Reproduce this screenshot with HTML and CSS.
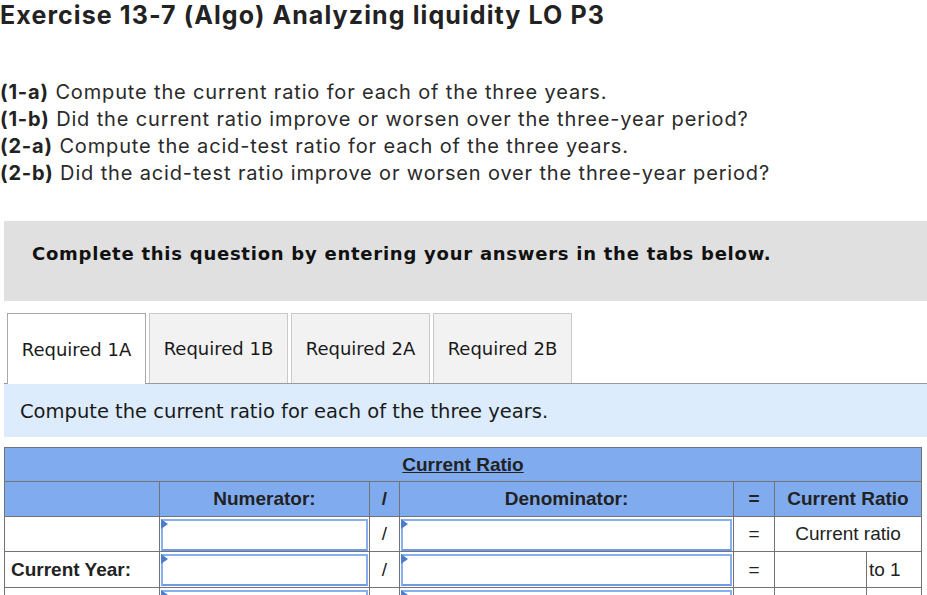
FILE: index.html
```html
<!DOCTYPE html>
<html>
<head>
<meta charset="utf-8">
<link rel="stylesheet" href="styles.css">
</head>
<body>
<h1 class="title">Exercise 13-7 (Algo) Analyzing liquidity LO P3</h1>
<div class="questions">
  <p><b>(1-a)</b> Compute the current ratio for each of the three years.</p>
  <p><b>(1-b)</b> Did the current ratio improve or worsen over the three-year period?</p>
  <p><b>(2-a)</b> Compute the acid-test ratio for each of the three years.</p>
  <p><b>(2-b)</b> Did the acid-test ratio improve or worsen over the three-year period?</p>
</div>
<div class="work">
  <div class="instruct">Complete this question by entering your answers in the tabs below.</div>
  <div class="tabs">
    <div class="tab active">Required 1A</div>
    <div class="tab">Required 1B</div>
    <div class="tab">Required 2A</div>
    <div class="tab">Required 2B</div>
  </div>
  <div class="prompt">Compute the current ratio for each of the three years.</div>
  <table class="ratio">
    <colgroup>
      <col class="c-label"><col class="c-num"><col class="c-slash"><col class="c-den"><col class="c-eq"><col class="c-res"><col class="c-to">
    </colgroup>
    <tr class="head h1">
      <th colspan="7"><span class="u">Current Ratio</span></th>
    </tr>
    <tr class="head h2">
      <th></th>
      <th>Numerator:</th>
      <th>/</th>
      <th>Denominator:</th>
      <th>=</th>
      <th colspan="2">Current Ratio</th>
    </tr>
    <tr class="r-a">
      <td></td>
      <td class="in"><div class="box"><input type="text"></div></td>
      <td class="op">/</td>
      <td class="in"><div class="box"><input type="text"></div></td>
      <td class="op">=</td>
      <td colspan="2" class="res">Current ratio</td>
    </tr>
    <tr class="r-b">
      <td class="lbl">Current Year:</td>
      <td class="in"><div class="box"><input type="text"></div></td>
      <td class="op">/</td>
      <td class="in"><div class="box"><input type="text"></div></td>
      <td class="op">=</td>
      <td></td>
      <td class="to">to 1</td>
    </tr>
    <tr class="r-a">
      <td class="lbl">1 Year Ago:</td>
      <td class="in"><div class="box"><input type="text"></div></td>
      <td class="op">/</td>
      <td class="in"><div class="box"><input type="text"></div></td>
      <td class="op">=</td>
      <td></td>
      <td class="to">to 1</td>
    </tr>
    <tr class="r-b">
      <td class="lbl">2 Years Ago:</td>
      <td class="in"><div class="box"><input type="text"></div></td>
      <td class="op">/</td>
      <td class="in"><div class="box"><input type="text"></div></td>
      <td class="op">=</td>
      <td></td>
      <td class="to">to 1</td>
    </tr>
  </table>
</div>
</body>
</html>
```
FILE: styles.css
```css
html, body {
  margin: 0;
  padding: 0;
  background: #fff;
}
body {
  color: #222;
  font-family: Inter, "Noto Sans", sans-serif;
}
.title {
  margin: 0;
  font-family: Inter, sans-serif;
  font-weight: 700;
  font-size: 25px;
  letter-spacing: 1.1px;
  line-height: 30px;
  color: #222;
}
.questions {
  margin-top: 49px;
}
.questions p {
  margin: 0;
  font-size: 20px;
  letter-spacing: 0.85px;
  line-height: 27px;
  color: #2a2a2a;
}
.questions b {
  font-weight: 700;
  color: #222;
}
.work {
  margin-top: 34px;
  padding-left: 4px;
}
.instruct {
  box-sizing: border-box;
  height: 80px;
  background: #e0e0e0;
  padding: 19px 0 0 28px;
  font-family: "DejaVu Sans", Verdana, sans-serif;
  font-weight: 700;
  font-size: 18px;
  letter-spacing: 0.75px;
  line-height: 28px;
  color: #111;
}
.tabs {
  display: flex;
  gap: 3px;
  margin-top: 12px;
  padding-left: 3px;
  border-bottom: 1px solid #9a9a9a;
}
.tab {
  box-sizing: border-box;
  width: 139px;
  height: 70px;
  display: flex;
  align-items: center;
  justify-content: center;
  background: #f2f2f2;
  border: 1px solid #c9c9c9;
  border-bottom: none;
  font-family: "DejaVu Sans", Verdana, sans-serif;
  font-size: 18px;
  color: #1a1a1a;
}
.tab.active {
  background: #fff;
  border-color: #a9a9a9;
  margin-bottom: -1px;
  height: 71px;
}
.prompt {
  box-sizing: border-box;
  height: 53px;
  background: #dcecfc;
  padding-left: 16px;
  padding-top: 2px;
  display: flex;
  align-items: center;
  font-family: "DejaVu Sans", Verdana, sans-serif;
  font-size: 19.5px;
  color: #1a1a1a;
}
.ratio {
  margin-top: 10px;
  border-collapse: collapse;
  table-layout: fixed;
  width: 917px;
  font-family: "Liberation Sans", Arial, sans-serif;
  font-size: 19px;
  color: #222;
}
.c-label { width: 155px; }
.c-num { width: 210px; }
.c-slash { width: 30px; }
.c-den { width: 334px; }
.c-eq { width: 41px; }
.c-res { width: 92px; }
.c-to { width: 55px; }
.ratio th, .ratio td {
  border: 1px solid #737373;
  padding: 0;
}
.ratio .h1 th, .ratio .r-a td {
  height: 33px;
}
.ratio .h2 th, .ratio .r-b td {
  height: 34px;
}
.ratio .head th {
  background: #80acef;
  font-weight: 700;
  text-align: center;
}
.u {
  text-decoration: underline;
}
.ratio td.op {
  text-align: center;
}
.ratio td.res {
  text-align: center;
}
.ratio td.lbl {
  font-weight: 700;
  padding-left: 6px;
}
.ratio td.to {
  padding-left: 2px;
}
.ratio td.in {
  padding: 1px 1px 0 1px;
}
.box {
  position: relative;
  box-sizing: border-box;
  height: 32px;
  border: 2px solid #86b0f0;
  border-bottom-color: #6f9be4;
  background: #fff;
}
.box::before {
  content: "";
  position: absolute;
  left: -2px;
  top: -2px;
  border-top: 5px solid transparent;
  border-bottom: 5px solid transparent;
  border-left: 7px solid #4a7dcc;
  height: 0;
  width: 0;
}
.box input {
  display: block;
  width: 100%;
  height: 100%;
  box-sizing: border-box;
  border: none;
  outline: none;
  background: transparent;
  font: inherit;
}
```
